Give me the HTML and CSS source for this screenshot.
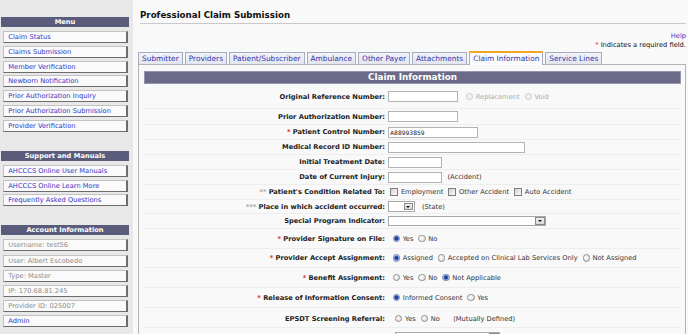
FILE: index.html
```html
<!DOCTYPE html>
<html lang="en">
<head>
<meta charset="utf-8">
<title>Professional Claim Submission</title>
<link rel="stylesheet" href="styles.css">
</head>
<body>
<div class="page">
  <aside class="sidebar">
    <section class="box">
      <h2 class="box-title">Menu</h2>
      <ul class="box-list">
        <li class="box-item"><a class="link" href="#">Claim Status</a></li>
        <li class="box-item"><a class="link" href="#">Claims Submission</a></li>
        <li class="box-item"><a class="link" href="#">Member Verification</a></li>
        <li class="box-item"><a class="link" href="#">Newborn Notification</a></li>
        <li class="box-item"><a class="link" href="#">Prior Authorization Inquiry</a></li>
        <li class="box-item"><a class="link" href="#">Prior Authorization Submission</a></li>
        <li class="box-item"><a class="link" href="#">Provider Verification</a></li>
      </ul>
    </section>
    <section class="box">
      <h2 class="box-title">Support and Manuals</h2>
      <ul class="box-list">
        <li class="box-item"><a class="link" href="#">AHCCCS Online User Manuals</a></li>
        <li class="box-item"><a class="link" href="#">AHCCCS Online Learn More</a></li>
        <li class="box-item"><a class="link" href="#">Frequently Asked Questions</a></li>
      </ul>
    </section>
    <section class="box">
      <h2 class="box-title">Account Information</h2>
      <ul class="box-list box-list-wide">
        <li class="box-item muted">Username: test56</li>
        <li class="box-item muted">User: Albert Escobedo</li>
        <li class="box-item muted">Type: Master</li>
        <li class="box-item muted">IP: 170.68.81.245</li>
        <li class="box-item muted">Provider ID: 025007</li>
        <li class="box-item"><a class="link" href="#">Admin</a></li>
      </ul>
    </section>
  </aside>

  <main class="main">
    <h1 class="title">Professional Claim Submission</h1>
    <div class="util">
      <a class="link" href="#">Help</a>
      <p><span class="req">*</span> Indicates a required field.</p>
    </div>

    <nav class="tabs">
      <a class="tab" href="#">Submitter</a>
      <a class="tab" href="#">Providers</a>
      <a class="tab" href="#">Patient/Subscriber</a>
      <a class="tab" href="#">Ambulance</a>
      <a class="tab" href="#">Other Payer</a>
      <a class="tab" href="#">Attachments</a>
      <a class="tab tab-active" href="#">Claim Information</a>
      <a class="tab" href="#">Service Lines</a>
    </nav>

    <div class="panel">
      <h2 class="panel-title">Claim Information</h2>
      <div class="form">
        <div class="row h24">
          <label class="lbl" for="origref">Original Reference Number:</label>
          <div class="val">
            <input class="field w70 ml2" id="origref" type="text">
            <label class="opt ml7 off"><input class="radio" type="radio" name="freq" disabled>Replacement</label>
            <label class="opt off"><input class="radio" type="radio" name="freq" disabled>Void</label>
          </div>
        </div>
        <div class="row h16">
          <label class="lbl" for="priorauth">Prior Authorization Number:</label>
          <div class="val"><input class="field w70" id="priorauth" type="text"></div>
        </div>
        <div class="row">
          <label class="lbl" for="pcn"><span class="req">*</span> Patient Control Number:</label>
          <div class="val"><input class="field w90" id="pcn" type="text" value="A88993859"></div>
        </div>
        <div class="row">
          <label class="lbl" for="mrn">Medical Record ID Number:</label>
          <div class="val"><input class="field w137" id="mrn" type="text"></div>
        </div>
        <div class="row">
          <label class="lbl" for="itd">Initial Treatment Date:</label>
          <div class="val"><input class="field w54" id="itd" type="text"></div>
        </div>
        <div class="row">
          <label class="lbl" for="dci">Date of Current Injury:</label>
          <div class="val"><input class="field w54" id="dci" type="text"><span class="note ml5">(Accident)</span></div>
        </div>
        <div class="row">
          <span class="lbl"><span class="req2">**</span> Patient's Condition Related To:</span>
          <div class="val pl2">
            <label class="opt"><input class="check" type="checkbox">Employment</label>
            <label class="opt"><input class="check" type="checkbox">Other Accident</label>
            <label class="opt"><input class="check" type="checkbox">Auto Accident</label>
          </div>
        </div>
        <div class="row h14">
          <label class="lbl" for="state"><span class="req2">***</span> Place in which accident occurred:</label>
          <div class="val">
            <span class="select w27"><select class="select-el" id="state"><option></option></select><span class="select-btn"></span></span>
            <span class="note ml7">(State)</span>
          </div>
        </div>
        <div class="row">
          <label class="lbl" for="spi">Special Program Indicator:</label>
          <div class="val">
            <span class="select w158"><select class="select-el" id="spi"><option></option></select><span class="select-btn"></span></span>
          </div>
        </div>
        <div class="row h20">
          <span class="lbl"><span class="req">*</span> Provider Signature on File:</span>
          <div class="val pl5">
            <label class="opt"><input class="radio" type="radio" name="sig" checked>Yes</label>
            <label class="opt"><input class="radio" type="radio" name="sig">No</label>
          </div>
        </div>
        <div class="row h19">
          <span class="lbl"><span class="req">*</span> Provider Accept Assignment:</span>
          <div class="val pl5">
            <label class="opt"><input class="radio" type="radio" name="acc" checked>Assigned</label>
            <label class="opt"><input class="radio" type="radio" name="acc">Accepted on Clinical Lab Services Only</label>
            <label class="opt"><input class="radio" type="radio" name="acc">Not Assigned</label>
          </div>
        </div>
        <div class="row h20">
          <span class="lbl"><span class="req">*</span> Benefit Assignment:</span>
          <div class="val pl5">
            <label class="opt"><input class="radio" type="radio" name="ben">Yes</label>
            <label class="opt"><input class="radio" type="radio" name="ben">No</label>
            <label class="opt"><input class="radio" type="radio" name="ben" checked>Not Applicable</label>
          </div>
        </div>
        <div class="row h20">
          <span class="lbl"><span class="req">*</span> Release of Information Consent:</span>
          <div class="val pl5">
            <label class="opt"><input class="radio" type="radio" name="rel" checked>Informed Consent</label>
            <label class="opt"><input class="radio" type="radio" name="rel">Yes</label>
          </div>
        </div>
        <div class="row h20 low">
          <span class="lbl">EPSDT Screening Referral:</span>
          <div class="val pl7">
            <label class="opt"><input class="radio" type="radio" name="epsdt">Yes</label>
            <label class="opt"><input class="radio" type="radio" name="epsdt">No</label>
            <span class="note ml8">(Mutually Defined)</span>
          </div>
        </div>
        <div class="row h20 last">
          <span class="lbl"></span>
          <div class="val pl7">
            <span class="select w105"><select class="select-el" aria-label="Delay Reason Code"><option></option></select><span class="select-btn"></span></span>
          </div>
        </div>
      </div>
    </div>
  </main>
</div>
</body>
</html>
```

FILE: styles.css
```css
* { box-sizing: border-box; }

html, body {
  margin: 0;
  padding: 0;
  height: 100%;
  overflow: hidden;
}

body {
  font-family: "DejaVu Sans", Verdana, sans-serif;
  font-size: 6.7px;
  color: #222;
  background: #f9f9f9;
}

.page {
  display: flex;
  height: 334px;
  overflow: hidden;
}

/* ---------- sidebar ---------- */
.sidebar {
  flex: 0 0 133px;
  background: #e8e8e8;
  padding: 17px 4px 0 1px;
}

.box + .box { margin-top: 19px; }

.box-title {
  margin: 0 0 4px;
  height: 10px;
  background: #5b5b7c;
  color: #fff;
  font-size: 6.7px;
  font-weight: bold;
  line-height: 10px;
  text-align: center;
}

.box-list {
  list-style: none;
  margin: 0;
  padding: 0 0.7px 0 1.7px;
  display: flex;
  flex-direction: column;
  gap: 2.8px;
}

.box-list-wide { gap: 3.2px; }

.box-item {
  height: 12px;
  background: #fafafa;
  border: 1px solid #c2c2c2;
  border-right: 2px solid #6c6c6c;
  border-bottom-color: #6c6c6c;
  padding-left: 4.6px;
  display: flex;
  align-items: center;
  white-space: nowrap;
}

.link { color: #3535c6; text-decoration: none; }
.muted { color: #8c8c8c; }

/* ---------- main ---------- */
.main {
  flex: 1;
  min-width: 0;
  padding: 0 2px 0 5px;
}

.title {
  margin: 0 0 0 2px;
  padding: 10px 0 2.5px;
  font-size: 8.7px;
  line-height: 10px;
  font-weight: bold;
  color: #111;
  border-bottom: 1px solid #c9c9c9;
}

.util {
  margin-top: 8px;
  text-align: right;
  line-height: 9px;
}

.util p { margin: 0; color: #111; }

.req { color: #e02828; }
.req2 { color: #a8a8a8; }

/* ---------- tabs ---------- */
.tabs {
  display: flex;
  align-items: flex-end;
  gap: 2px;
  height: 14px;
  margin-top: 1.5px;
  margin-bottom: -1px;
  position: relative;
  z-index: 1;
}

.tab {
  height: 12px;
  margin-bottom: 1px;
  padding: 0 3px;
  display: flex;
  align-items: center;
  border: 1px solid #a5abc0;
  border-bottom: 0;
  background: linear-gradient(#f3f4f8, #e2e5ee);
  color: #3434aa;
  font-size: 7.4px;
  text-decoration: none;
  white-space: nowrap;
}

.tab-active {
  height: 14px;
  margin-bottom: 0;
  padding-bottom: 1px;
  background: #fbfbfb;
  border-top: 2px solid #f3a526;
}

/* ---------- panel ---------- */
.panel {
  border: 1px solid #b4b4b4;
  background: #f9f9f9;
  padding: 6px 4px 0 5px;
  height: 300px;
}

.panel-title {
  margin: 0;
  height: 13px;
  background: #6b6b89;
  border: 1px solid #9595ad;
  color: #fff;
  font-size: 8.8px;
  font-weight: bold;
  line-height: 11px;
  text-align: center;
}

.form { margin-top: 1px; }

.row {
  display: grid;
  grid-template-columns: 241px 1fr;
  column-gap: 3px;
  align-items: center;
  height: 15px;
  border-bottom: 1px solid #eeeeee;
}

.h14 { height: 14px; }
.h16 { height: 16px; }
.h19 { height: 19px; }
.h20 { height: 20px; }
.h24 { height: 24px; }
.low { padding-top: 2px; }
.last { border-bottom: 0; align-items: start; padding-top: 3.5px; }

.lbl {
  text-align: right;
  font-weight: bold;
  white-space: nowrap;
  color: #222;
}

.val {
  display: flex;
  align-items: center;
  white-space: nowrap;
  color: #333;
}

.pl2 { padding-left: 2px; }
.pl5 { padding-left: 4.7px; }
.pl7 { padding-left: 7px; }
.ml2 { margin-left: 2px; }
.ml5 { margin-left: 5px; }
.ml7 { margin-left: 7.3px; }
.ml8 { margin-left: 8.5px; }

.note { color: #333; }

/* inputs */
.field {
  height: 11px;
  margin: 0;
  padding: 0 1px;
  border: 1px solid #b3b3b3;
  background: #fff;
  font-family: "DejaVu Sans", Verdana, sans-serif;
  font-size: 6px;
  color: #222;
}

.w54 { width: 54.4px; }
.w70 { width: 70.4px; }
.w90 { width: 90.4px; }
.w137 { width: 137px; }
.w27 { width: 26.7px; }
.w158 { width: 158.4px; }
.w105 { width: 105px; }

/* select */
.select {
  position: relative;
  display: inline-block;
  height: 10.6px;
  border: 1px solid #a8a8a8;
  background: #fff;
}

.select-el {
  -webkit-appearance: none;
  appearance: none;
  display: block;
  width: 100%;
  height: 100%;
  margin: 0;
  padding: 0;
  border: 0;
  background: transparent;
  font-size: 6px;
}

.select-btn {
  position: absolute;
  top: 0.5px;
  right: 0.5px;
  bottom: 0.5px;
  width: 9.5px;
  background: linear-gradient(#f0f0f0, #d8d8d8);
  border: 1px solid #8a8a8a;
  pointer-events: none;
}

.select-btn::after {
  content: "";
  position: absolute;
  left: 50%;
  top: 50%;
  margin: -1px 0 0 -2px;
  border-left: 2px solid transparent;
  border-right: 2px solid transparent;
  border-top: 2.4px solid #111;
}

/* options */
.opt {
  display: inline-flex;
  align-items: center;
  gap: 2.6px;
  margin-right: 4.9px;
  color: #333;
}

.off { color: #acacac; }

.radio {
  -webkit-appearance: none;
  appearance: none;
  flex: none;
  width: 7.4px;
  height: 7.4px;
  margin: 0;
  border: 1px solid #8e8e8e;
  border-radius: 50%;
  background: radial-gradient(circle at 35% 35%, #ffffff 0, #ececec 50%, #cdcdcd 100%);
}

.radio:checked {
  border-color: #6f7fa6;
  background: radial-gradient(circle, #1c3b94 0, #1c3b94 1.3px, #6488d6 2.1px, #e7edf9 3px);
}

.radio:disabled {
  border-color: #cccccc;
  background: #f1f1f1;
}

.check {
  -webkit-appearance: none;
  appearance: none;
  flex: none;
  width: 8.3px;
  height: 8.3px;
  margin: 0;
  border: 1px solid #7d7d7d;
  background: linear-gradient(135deg, #d4d4d4, #fbfbfb);
}
```
